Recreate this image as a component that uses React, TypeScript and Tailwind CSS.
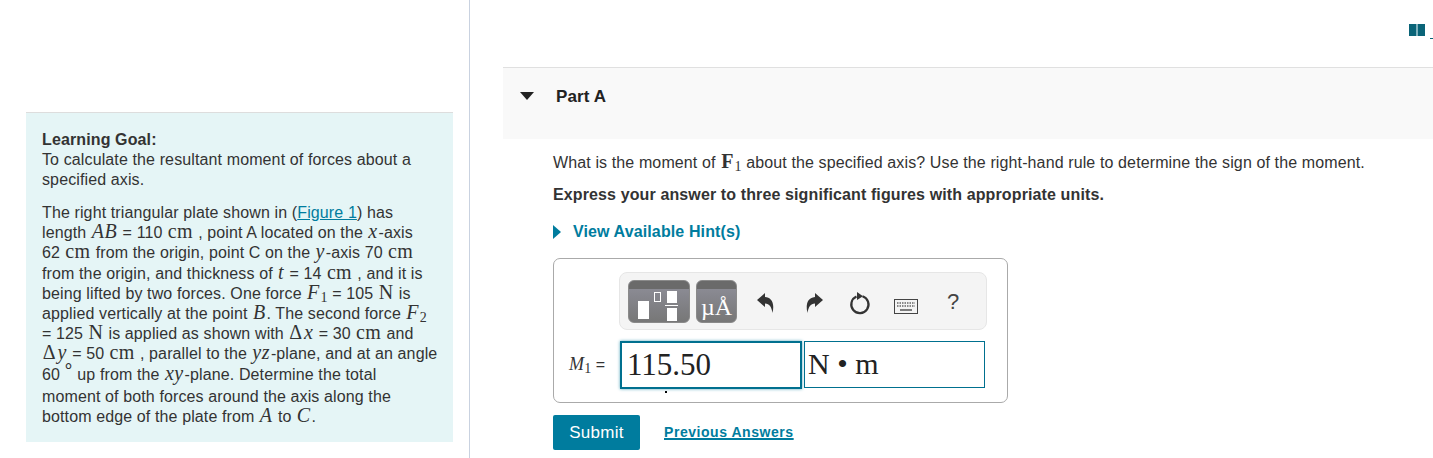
import React from 'react';

const Sans = "font-['Liberation_Sans',Arial,sans-serif]";

const Var = ({ children }: { children: React.ReactNode }) => (
  <i className="font-['Liberation_Serif',serif] text-[20px] leading-[0] tracking-[0.6px] mx-[0.75px]">{children}</i>
);

const Unit = ({ children }: { children: React.ReactNode }) => (
  <span className="font-['Liberation_Serif',serif] text-[20px] leading-[0] tracking-[0.3px] mx-[0.75px]">{children}</span>
);

const Sub = ({ children }: { children: React.ReactNode }) => (
  <span className="font-['Liberation_Serif',serif] text-[14px] leading-[0] align-[-3px]">{children}</span>
);

const Line = ({ className, children }: { className?: string; children: React.ReactNode }) => (
  <span className={`${className ?? ''} block h-5 leading-5`}>{children}</span>
);

const TemplateButton = ({ className, children }: { className: string; children: React.ReactNode }) => (
  <div className={`${className} h-[43px] rounded-[6px] overflow-hidden border border-[#8a8a8a] flex flex-col bg-gradient-to-b from-[#8f8f9a] to-[#777777]`}>
    <div className="h-[8px] bg-[#6a6a6a] shrink-0"></div>
    <div className="flex-1 flex items-end">{children}</div>
  </div>
);

const ArrowIcon = ({ className }: { className?: string }) => (
  <svg width="18" height="20" viewBox="0 0 18 20" className={className}>
    <path d="M0 7 L8 0 L8 4 C14 4.5 18 9 15.5 20 C14.5 14 12.5 10.5 8 10.5 L8 14 Z" fill="#333333" />
  </svg>
);

const App: React.FC = () => {
  return (
    <div className={`${Sans} w-[1433px] h-[458px] overflow-hidden flex bg-white text-[16px] leading-5 text-[#333333] tracking-[0.12px]`}>
      {/* Left column */}
      <div className="w-[470px] h-full shrink-0 border-r border-[#c9d2e0] pt-[112px] pl-[26px] pr-[16px]">
        <div className="h-[330px] bg-[#e5f5f6] border-t border-[#dddddd] pt-[17px] pl-[16px] whitespace-nowrap">
          <p className="font-bold">Learning Goal:</p>
          <p>To calculate the resultant moment of forces about a<br />specified axis.</p>
          <div className="mt-[13px]">
            <Line>The right triangular plate shown in (<a className="text-[#007c9e] underline">Figure 1</a>) has</Line>
            <Line>length <Var>AB</Var> = 110 <Unit>cm</Unit> , point A located on the <Var>x</Var>-axis</Line>
            <Line>62 <Unit>cm</Unit> from the origin, point C on the <Var>y</Var>-axis 70 <Unit>cm</Unit></Line>
            <Line className="mt-px">from the origin, and thickness of <Var>t</Var> = 14 <Unit>cm</Unit> , and it is</Line>
            <Line>being lifted by two forces. One force <Var>F</Var><Sub>1</Sub> = 105 <Unit>N</Unit> is</Line>
            <Line>applied vertically at the point <Var>B</Var>. The second force <Var>F</Var><Sub>2</Sub></Line>
            <Line>= 125 <Unit>N</Unit> is applied as shown with <Unit>Δ</Unit><Var>x</Var> = 30 <Unit>cm</Unit> and</Line>
            <Line><Unit>Δ</Unit><Var>y</Var> = 50 <Unit>cm</Unit> , parallel to the <Var>yz</Var>-plane, and at an angle</Line>
            <Line className="mt-px">60 <span className="text-[20px] leading-[0] align-[2px]">°</span> up from the <Var>xy</Var>-plane. Determine the total</Line>
            <Line className="mt-[2px]">moment of both forces around the axis along the</Line>
            <Line>bottom edge of the plate from <Var>A</Var> to <Var>C</Var>.</Line>
          </div>
        </div>
      </div>

      {/* Right column */}
      <div className="flex-1 pl-[33px]">
        <div className="h-[67px] flex justify-end pt-[24px]">
          <div className="flex items-start">
            <svg width="16" height="12" viewBox="0 0 16 12" className="block">
              <rect x="0" y="0" width="16" height="12" fill="#0a6478" />
              <rect x="7" y="0" width="2" height="12" fill="#7fb2be" />
            </svg>
            <div className="w-[3px] h-[1px] bg-[#0a6478] mt-[14px] ml-[5px]"></div>
          </div>
        </div>

        <div className="h-[72px] bg-[#f9f9f9] border-t border-[#e0e0e0] flex pt-[19px] pl-[17px]">
          <svg width="14" height="8" viewBox="0 0 14 8" className="mt-[5px]">
            <polygon points="0,0 14,0 7,8" fill="#222222" />
          </svg>
          <span className="ml-[22px] font-bold text-[#222222] text-[17px]">Part A</span>
        </div>

        <div className="pl-[50px]">
          <p className="mt-[14px] whitespace-nowrap">
            What is the moment of <b className="font-['Liberation_Serif',serif] text-[20px] leading-[0] mx-[1px]">F</b><Sub>1</Sub> about the specified axis? Use the right-hand rule to determine the sign of the moment.
          </p>
          <p className="mt-[12px] font-bold">Express your answer to three significant figures with appropriate units.</p>
          <div className="mt-[17px] flex items-center font-bold text-[#007c9e]">
            <svg width="8" height="14" viewBox="0 0 8 14">
              <polygon points="0,0 8,7 0,14" fill="#007c9e" />
            </svg>
            <span className="ml-[12px]">View Available Hint(s)</span>
          </div>

          {/* Answer box */}
          <div className="mt-[16px] w-[455px] h-[145px] border border-[#aaaaaa] rounded-[7px] pt-[13px]">
            <div className="ml-[65px] w-[368px] h-[58px] bg-[#f4f4f4] border border-[#e6e6e6] rounded-[8px] flex items-center pl-[8px]">
              <TemplateButton className="w-[62px]">
                <div className="w-full h-full flex items-end pl-[9px]">
                  <div className="w-[11px] h-[18px] bg-white mb-[3px]"></div>
                  <div className="w-[7px] h-[10px] border border-white mb-[20px] ml-[5px]"></div>
                  <div className="flex flex-col items-center ml-[4px] mb-[1px]">
                    <div className="w-[10px] h-[12px] bg-white"></div>
                    <div className="w-[13px] h-[1px] bg-white my-[2px]"></div>
                    <div className="w-[10px] h-[13px] bg-white"></div>
                  </div>
                </div>
              </TemplateButton>
              <TemplateButton className="w-[41px] ml-[6px]">
                <span className="w-full text-center font-['Liberation_Serif',serif] text-[24px] leading-[30px] text-white tracking-normal">µÅ</span>
              </TemplateButton>

              <ArrowIcon className="ml-[20px] mt-[4px]" />
              <ArrowIcon className="ml-[30px] mt-[4px] -scale-x-100" />
              <svg width="22" height="24" viewBox="0 0 22 24" className="ml-[26px] mt-[4px]" fill="none">
                <path d="M13.5 5.3 A8.6 8.6 0 1 1 7.5 5.6" stroke="#333333" strokeWidth="2.2" />
                <polygon points="8,1 14,5.2 8,9" fill="#333333" />
              </svg>
              <svg width="24" height="16" viewBox="0 0 24 16" className="ml-[23px] mt-[11px]" fill="none">
                <rect x="0.5" y="0.5" width="23" height="14" fill="#f4f4f4" stroke="#444444" />
                <path d="M3 4h18M3 7h18" stroke="#666666" strokeWidth="1.5" strokeDasharray="1.5 1" />
                <path d="M6 11h12" stroke="#555555" strokeWidth="1.5" />
              </svg>
              <span className="ml-[29px] mt-[2px] text-[22px] text-[#444444] tracking-normal">?</span>
            </div>

            <div className="mt-[11px] flex items-start">
              <span className="ml-[15px] mt-[13px] w-[51px] text-[#333333] whitespace-nowrap">
                <i className="font-['Liberation_Serif',serif] text-[18px]">M</i><Sub>1</Sub> =
              </span>
              <div className="w-[182px] h-[48px] border-2 border-[#00708f] shadow-[0_0_3px_#5aa8bd] pl-[5px] font-['Liberation_Serif',serif] text-[31px] leading-[43px] text-[#222222] tracking-normal">115.50</div>
              <div className="ml-[2px] w-[181px] h-[47px] border border-[#00708f] pl-[3px] font-['Liberation_Serif',serif] text-[30px] leading-[44px] text-[#222222] tracking-normal">N • m</div>
            </div>
            <div className="ml-[111px] mt-[2px] w-[2px] h-[2px] bg-black"></div>
          </div>

          <div className="mt-[12px] flex items-center">
            <button className="w-[87px] h-[35px] bg-[#007c9e] rounded-[2px] text-white text-[17px] tracking-[0.3px]">Submit</button>
            <a className="ml-[24px] mb-[2px] font-bold text-[#007c9e] underline decoration-2 text-[14px] tracking-[0.55px]">Previous Answers</a>
          </div>
        </div>
      </div>
    </div>
  );
};

export default App;
